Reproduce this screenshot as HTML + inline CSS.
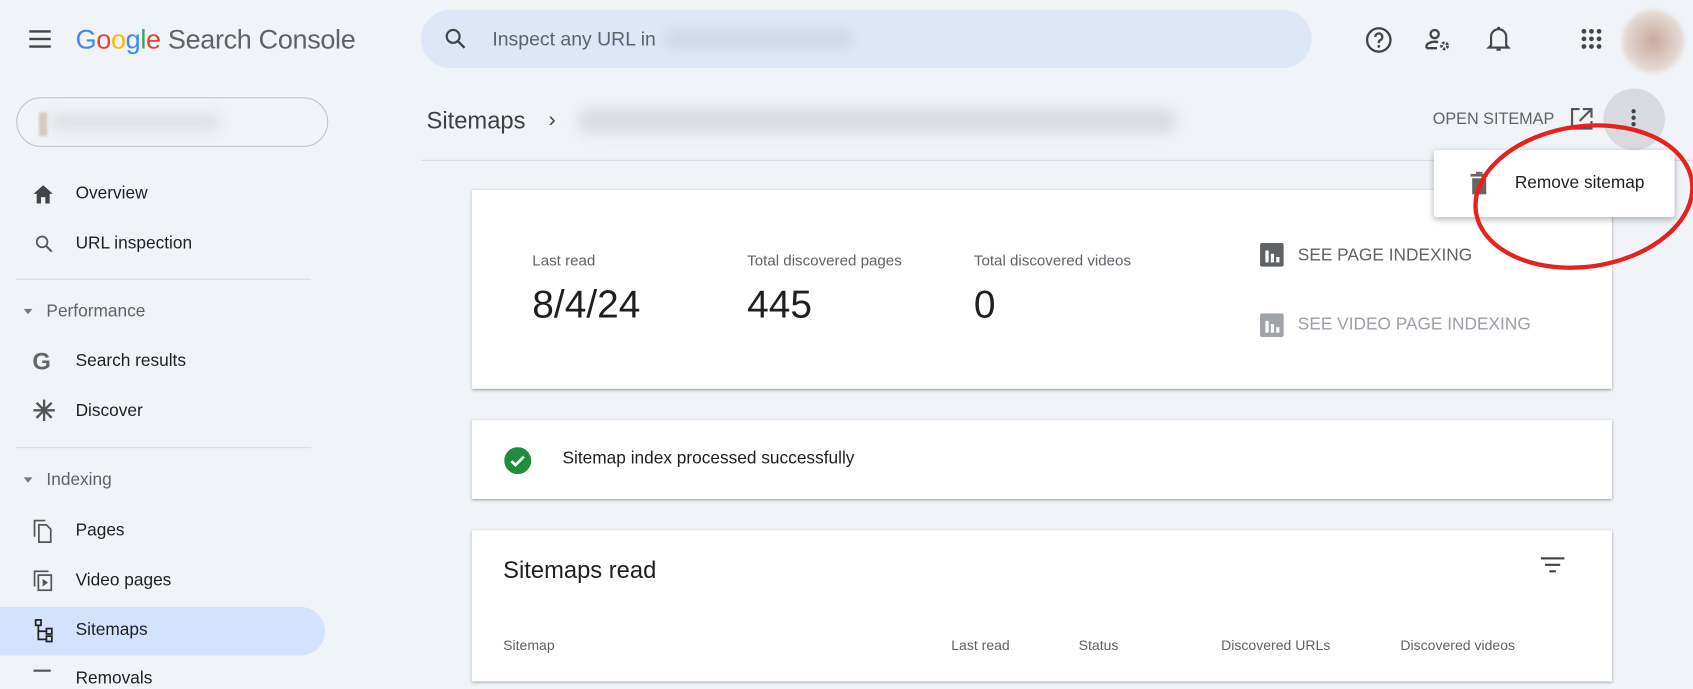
<!DOCTYPE html>
<html><head><meta charset="utf-8">
<style>
html,body{margin:0;padding:0;width:1693px;height:675px;overflow:hidden;background:#f0f4f9;}
#w{position:absolute;left:0;top:0;width:1568px;height:625px;transform:scale(1.0797,1.08);transform-origin:0 0;font-family:"Liberation Sans",sans-serif;color:#1f1f1f;}
.a{position:absolute;white-space:nowrap;}
.nav{position:absolute;left:70px;font-size:16px;color:#1f1f1f;transform:translateY(-50%);}
.ic{position:absolute;left:30px;transform:translateY(-50%);}
.sec{position:absolute;left:43px;font-size:16px;color:#5f6368;transform:translateY(-50%);}
.card{position:absolute;left:437px;width:1056px;background:#fff;box-shadow:0 1px 3px rgba(0,0,0,.3),0 1px 2px rgba(0,0,0,.1);}
.lbl{position:absolute;font-size:14px;color:#5f6368;}
.val{position:absolute;font-size:36px;color:#1f1f1f;}
.th{position:absolute;font-size:13px;color:#5f6368;top:590px;}
.blur{position:absolute;background:#dfe2e7;filter:blur(6px);border-radius:12px;}
</style></head><body><div id="w">
<svg class="a" style="left:27px;top:27px" width="22" height="18"><rect x="0" y="1" width="20" height="2.2" fill="#444"/><rect x="0" y="8" width="20" height="2.2" fill="#444"/><rect x="0" y="15" width="20" height="2.2" fill="#444"/></svg>
<div class="a" style="left:70px;top:23px;font-size:25px;letter-spacing:-0.3px"><span style="color:#4285f4">G</span><span style="color:#ea4335">o</span><span style="color:#fbbc05">o</span><span style="color:#4285f4">g</span><span style="color:#34a853">l</span><span style="color:#ea4335">e</span><span style="color:#5f6368"> Search Console</span></div>
<div class="a" style="left:390px;top:9px;width:825px;height:54px;border-radius:27px;background:#dde7f8"></div>
<svg class="a" style="left:411px;top:25px" width="22" height="22" viewBox="0 0 24 24"><circle cx="9.5" cy="9.5" r="6.5" fill="none" stroke="#444" stroke-width="2.2"/><path d="M14.5 14.5L21 21" stroke="#444" stroke-width="2.4"/></svg>
<div class="a" style="left:456px;top:26px;font-size:18px;color:#5f6368">Inspect any URL in</div>
<div class="blur" style="left:615px;top:27px;width:175px;height:18px;background:#cfd8e8"></div>
<svg class="a" style="left:1264px;top:24px" width="26" height="26" viewBox="0 0 24 24"><circle cx="12" cy="12" r="10" fill="none" stroke="#444" stroke-width="2"/><path d="M9 9.5a3 3 0 1 1 4.2 2.7c-.9.4-1.2 1-1.2 2v.5" fill="none" stroke="#444" stroke-width="2"/><circle cx="12" cy="17.5" r="1.2" fill="#444"/></svg>
<svg class="a" style="left:1319px;top:24px" width="26" height="26" viewBox="0 0 24 24"><circle cx="9" cy="7" r="3.5" fill="none" stroke="#444" stroke-width="2"/><path d="M2 19v-1.5c0-2.5 4-4 7-4 1 0 2 .1 3 .4M2 19h9" fill="none" stroke="#444" stroke-width="2"/><circle cx="17.5" cy="17" r="2.6" fill="none" stroke="#444" stroke-width="2.4" stroke-dasharray="2 1.3"/></svg>
<svg class="a" style="left:1376px;top:23px" width="24" height="26" viewBox="0 0 24 26"><path d="M5 19V11a7 7 0 0 1 14 0v8l2 2H3z" fill="none" stroke="#444" stroke-width="2"/><path d="M10 23h4" stroke="#444" stroke-width="2"/><circle cx="12" cy="3" r="1.3" fill="#444"/></svg>
<svg class="a" style="left:1464px;top:26px" width="20" height="20"><g fill="#444"><circle cx="3" cy="3" r="2.2"/><circle cx="10" cy="3" r="2.2"/><circle cx="17" cy="3" r="2.2"/><circle cx="3" cy="10" r="2.2"/><circle cx="10" cy="10" r="2.2"/><circle cx="17" cy="10" r="2.2"/><circle cx="3" cy="17" r="2.2"/><circle cx="10" cy="17" r="2.2"/><circle cx="17" cy="17" r="2.2"/></g></svg>
<div class="a" style="left:1502px;top:9px;width:58px;height:58px;border-radius:50%;background:radial-gradient(circle,#c9a99c,#e3d6d0 60%,#eceaea);filter:blur(2px)"></div>
<div class="a" style="left:15px;top:90px;width:287px;height:44px;border:1px solid #bfc3c8;border-radius:23px"></div>
<div class="a" style="left:36px;top:104px;width:8px;height:22px;background:#d8c8c0;filter:blur(1px)"></div>
<div class="blur" style="left:45px;top:104px;width:160px;height:18px"></div>
<svg class="ic" style="top:180px;left:31px" width="18" height="17" viewBox="0 0 18 17"><path d="M9 0L0 8h3v9h4v-6h4v6h4V8h3z" fill="#444"/></svg>
<div class="nav" style="top:180px">Overview</div>
<svg class="ic" style="top:226px;left:32px" width="18" height="18" viewBox="0 0 18 18"><circle cx="7" cy="7" r="5" fill="none" stroke="#555" stroke-width="1.6"/><path d="M10.5 10.5L16 16" stroke="#555" stroke-width="1.8"/></svg>
<div class="nav" style="top:226px">URL inspection</div>
<div class="a" style="left:15px;top:258px;width:273px;height:1px;background:#dadce0"></div>
<div class="a" style="left:22px;top:286px;width:0;height:0;border-left:4px solid transparent;border-right:4px solid transparent;border-top:5px solid #777"></div>
<div class="sec" style="top:289px">Performance</div>
<div class="ic" style="top:335px;left:30px;font-size:22px;font-weight:bold;color:#666">G</div>
<div class="nav" style="top:335px">Search results</div>
<div class="ic" style="top:381px;left:30px;font-size:26px;font-weight:bold;color:#555">✳</div>
<div class="nav" style="top:381px">Discover</div>
<div class="a" style="left:15px;top:414px;width:273px;height:1px;background:#dadce0"></div>
<div class="a" style="left:22px;top:442px;width:0;height:0;border-left:4px solid transparent;border-right:4px solid transparent;border-top:5px solid #777"></div>
<div class="sec" style="top:445px">Indexing</div>
<svg class="ic" style="top:492px;left:31px" width="18" height="22" viewBox="0 0 18 22"><path d="M1 16V1h10" fill="none" stroke="#555" stroke-width="1.6"/><path d="M5 5h7l4 4v12H5z" fill="none" stroke="#555" stroke-width="1.6"/></svg>
<div class="nav" style="top:492px">Pages</div>
<svg class="ic" style="top:538px;left:31px" width="18" height="20" viewBox="0 0 18 20"><path d="M1 15V1h13" fill="none" stroke="#555" stroke-width="1.6"/><rect x="4.5" y="4.5" width="12" height="14" fill="none" stroke="#555" stroke-width="1.6"/><path d="M8.5 8v7l5-3.5z" fill="#555"/></svg>
<div class="nav" style="top:538px">Video pages</div>
<div class="a" style="left:0;top:562px;width:301px;height:45px;background:#d3e3fd;border-radius:0 23px 23px 0"></div>
<svg class="ic" style="top:584px;left:32px" width="18" height="22" viewBox="0 0 18 22"><rect x="1" y="1" width="5" height="5" fill="none" stroke="#222" stroke-width="1.6"/><rect x="11" y="9" width="5" height="5" fill="none" stroke="#222" stroke-width="1.6"/><rect x="11" y="16" width="5" height="5" fill="none" stroke="#222" stroke-width="1.6"/><path d="M3.5 6v13H11M3.5 11.5H11" fill="none" stroke="#222" stroke-width="1.6"/></svg>
<div class="nav" style="top:584px">Sitemaps</div>
<div class="a" style="left:70px;top:620px;font-size:16px;color:#1f1f1f">Removals</div>
<div class="a" style="left:31px;top:620px;width:16px;height:6px;border-top:2px solid #555"></div>
<div class="a" style="left:395px;top:99px;font-size:22px;color:#3c4043">Sitemaps</div>
<div class="a" style="left:508px;top:100px;font-size:20px;color:#444">›</div>
<div class="blur" style="left:535px;top:100px;width:555px;height:24px;background:#d9dce1"></div>
<div class="a" style="left:390px;top:148px;width:1178px;height:1px;background:#dadce0"></div>
<div class="a" style="left:1327px;top:102px;font-size:15px;color:#5f6368">OPEN SITEMAP</div>
<svg class="a" style="left:1454px;top:99px" width="22" height="22" viewBox="0 0 22 22"><path d="M9 2H2v18h18v-7" fill="none" stroke="#555" stroke-width="2"/><path d="M12 2h8v8M20 2L9 13" fill="none" stroke="#555" stroke-width="2"/></svg>
<div class="a" style="left:1485px;top:82px;width:57px;height:57px;border-radius:50%;background:#d8dadf"></div>
<svg class="a" style="left:1510px;top:100px" width="6" height="18"><circle cx="3" cy="3" r="2" fill="#444"/><circle cx="3" cy="9" r="2" fill="#444"/><circle cx="3" cy="15" r="2" fill="#444"/></svg>
<div class="card" style="top:176px;height:184px"></div>
<div class="lbl" style="left:493px;top:233px">Last read</div>
<div class="lbl" style="left:692px;top:233px">Total discovered pages</div>
<div class="lbl" style="left:902px;top:233px">Total discovered videos</div>
<div class="val" style="left:493px;top:261px">8/4/24</div>
<div class="val" style="left:692px;top:261px">445</div>
<div class="val" style="left:902px;top:261px">0</div>
<svg class="a" style="left:1167px;top:225px" width="22" height="22"><rect width="22" height="22" rx="2" fill="#5f6368"/><rect x="5" y="7" width="3" height="11" fill="#fff"/><rect x="10" y="10" width="3" height="8" fill="#fff"/><rect x="15" y="13" width="3" height="5" fill="#fff"/></svg>
<div class="a" style="left:1202px;top:228px;font-size:16px;color:#5f6368">SEE PAGE INDEXING</div>
<svg class="a" style="left:1167px;top:290px" width="22" height="22"><rect width="22" height="22" rx="2" fill="#a0a3a7"/><rect x="5" y="7" width="3" height="11" fill="#fff"/><rect x="10" y="10" width="3" height="8" fill="#fff"/><rect x="15" y="13" width="3" height="5" fill="#fff"/></svg>
<div class="a" style="left:1202px;top:292px;font-size:16px;color:#9aa0a6">SEE VIDEO PAGE INDEXING</div>
<div class="card" style="top:389px;height:73px"></div>
<svg class="a" style="left:467px;top:414px" width="25" height="25" viewBox="0 0 24 24"><circle cx="12" cy="12" r="12" fill="#1e8e3e"/><path d="M6.5 12.5l3.5 3.5 7.5-7.5" fill="none" stroke="#fff" stroke-width="2.4"/></svg>
<div class="a" style="left:521px;top:416px;font-size:16px;color:#1f1f1f">Sitemap index processed successfully</div>
<div class="card" style="top:491px;height:140px"></div>
<div class="a" style="left:466px;top:515px;font-size:22px;color:#1f1f1f">Sitemaps read</div>
<svg class="a" style="left:1427px;top:515px" width="22" height="16"><rect x="0" y="1" width="22" height="2" fill="#444"/><rect x="4" y="7" width="14" height="2" fill="#444"/><rect x="8" y="13" width="6" height="2" fill="#444"/></svg>
<div class="th" style="left:466px">Sitemap</div>
<div class="th" style="left:881px">Last read</div>
<div class="th" style="left:999px">Status</div>
<div class="th" style="left:1131px">Discovered URLs</div>
<div class="th" style="left:1297px">Discovered videos</div>
<div class="a" style="left:1328px;top:139px;width:223px;height:62px;background:#fff;border-radius:3px;box-shadow:0 2px 6px rgba(0,0,0,.3)"></div>
<svg class="a" style="left:1361px;top:159px" width="18" height="22" viewBox="0 0 18 22"><rect x="1" y="2" width="16" height="2.5" fill="#666"/><rect x="6" y="0" width="6" height="2" fill="#666"/><path d="M2.5 6h13v15h-13z" fill="#666"/></svg>
<div class="a" style="left:1403px;top:161px;font-size:16px;color:#1f1f1f">Remove sitemap</div>
<svg class="a" style="left:1350px;top:100px" width="218" height="160"><ellipse cx="117" cy="82" rx="101" ry="65" transform="rotate(-8 117 82)" fill="none" stroke="#e8211d" stroke-width="4"/></svg>
</div></body></html>
